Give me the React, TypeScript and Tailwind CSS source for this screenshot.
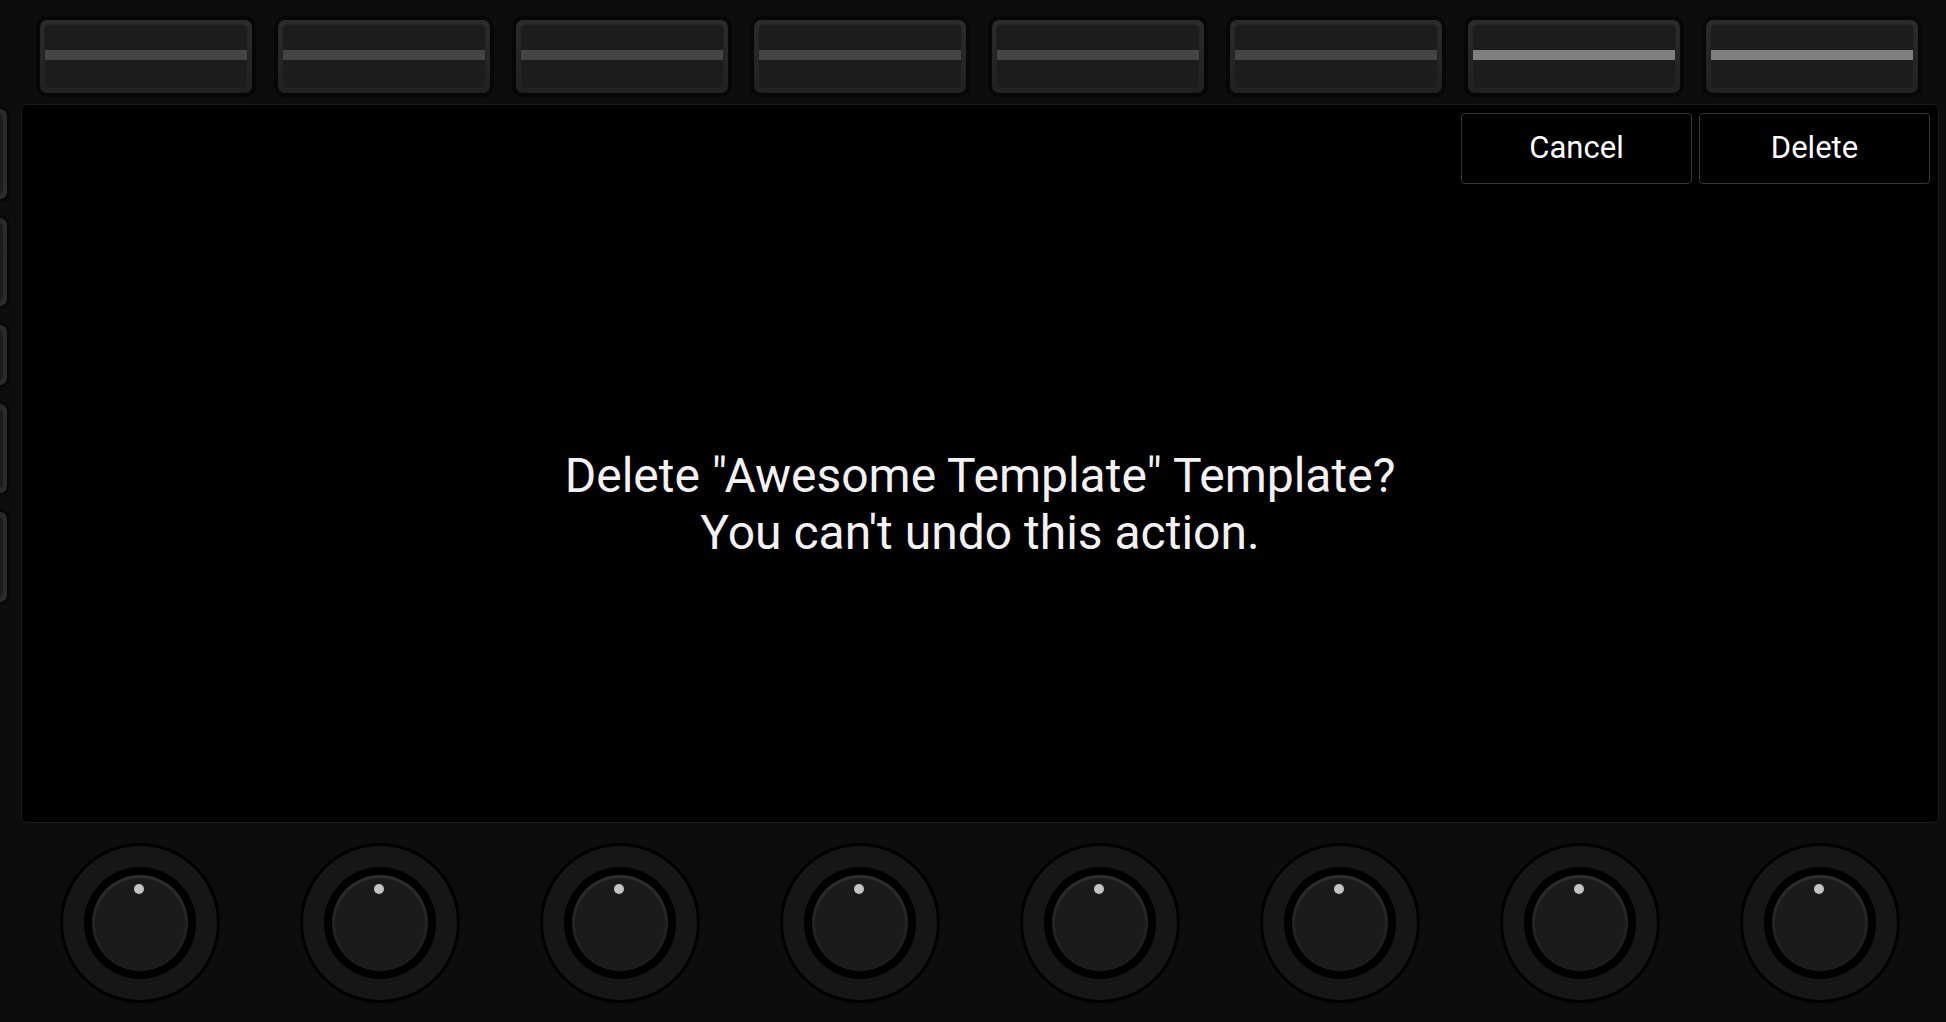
const font = { fontFamily: 'Roboto, "Noto Sans", sans-serif' };

const topKeys = [false, false, false, false, false, false, true, true];
const sideKeys = [96, 94, 66, 95, 96];

function TopKey({ lit }: { lit: boolean }) {
  return (
    <div className="w-[220px] h-[81px] rounded-[10px] bg-[#070707] p-[4px]">
      <div className="h-full rounded-[7px] bg-gradient-to-b from-[#2b2b2b] to-[#212121] p-[4px]">
        <div className="h-full rounded-[6px] bg-[#1c1c1c] border border-[#242424] pt-[25px]">
          <div className={lit ? 'h-[10px] bg-[#808080]' : 'h-[10px] bg-[#444444]'} />
        </div>
      </div>
    </div>
  );
}

function SideKey({ h }: { h: number }) {
  return (
    <div className="w-[40px] -ml-[30px] rounded-[10px] bg-[#070707] p-[3px]" style={{ height: h }}>
      <div className="h-full rounded-[7px] bg-gradient-to-r from-[#222] to-[#2b2b2b] p-[4px]">
        <div className="h-full rounded-[6px] bg-[#1c1c1c]" />
      </div>
    </div>
  );
}

function Knob() {
  return (
    <div className="w-[160px] h-[160px] rounded-full bg-[#161616] border-[3px] border-black flex items-center justify-center">
      <div className="w-[112px] h-[112px] rounded-full bg-black flex items-center justify-center">
        <div className="relative w-[96px] h-[96px] rounded-full bg-gradient-to-b from-[#2e2e2e] to-[#1a1a1a] p-[3px]">
          <div className="w-full h-full rounded-full bg-[#1b1b1b]" />
          <div className="absolute top-[9px] left-[42px] w-[10px] h-[10px] rounded-full bg-[#c4c4c4]" />
        </div>
      </div>
    </div>
  );
}

export default function App() {
  return (
    <div className="w-[1946px] h-[1022px] bg-[#0d0d0d] overflow-hidden flex flex-col" style={font}>
      <div className="flex gap-[18px] pl-[36px] pt-[16px]">
        {topKeys.map((lit, i) => (
          <TopKey key={i} lit={lit} />
        ))}
      </div>

      <div className="flex mt-[7px]">
        <div className="w-[21px] overflow-hidden flex flex-col gap-[13px] pt-[2px]">
          {sideKeys.map((h, i) => (
            <SideKey key={i} h={h} />
          ))}
        </div>
        <div className="w-[1918px] h-[719px] bg-black border border-[#1c1c1c] rounded-[6px] flex flex-col">
          <div className="flex justify-end gap-[7px] pt-[8px] pr-[8px]">
            <button className="w-[231px] h-[71px] border border-[#363636] rounded-[4px] bg-black text-white text-[31px]">
              Cancel
            </button>
            <button className="w-[231px] h-[71px] border border-[#363636] rounded-[4px] bg-black text-white text-[31px]">
              Delete
            </button>
          </div>
          <div className="mt-[263px] text-center text-[#f2f2f2] text-[48px] leading-[57px]">
            <p>Delete "Awesome Template" Template?</p>
            <p>You can't undo this action.</p>
          </div>
        </div>
      </div>

      <div className="flex gap-[80px] pl-[60px] mt-[20px]">
        {Array.from({ length: 8 }).map((_, i) => (
          <Knob key={i} />
        ))}
      </div>
    </div>
  );
}
